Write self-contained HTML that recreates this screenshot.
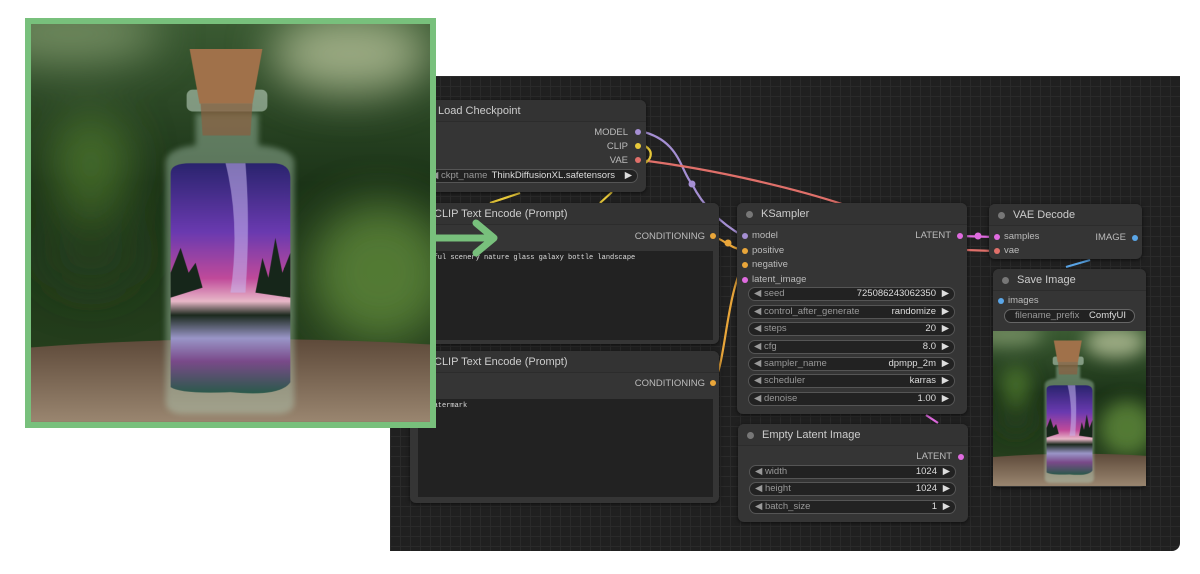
<!DOCTYPE html>
<html><head><meta charset="utf-8"><style>
*{margin:0;padding:0;box-sizing:border-box}
body{width:1200px;height:574px;background:#fff;position:relative;overflow:hidden;font-family:"Liberation Sans",sans-serif}
.canvas{position:absolute;left:390px;top:76px;width:790px;height:475px;background-color:#202020;border-radius:0 0 8px 0;
background-image:linear-gradient(#2a2a2a 1px,transparent 1px),linear-gradient(90deg,#2a2a2a 1px,transparent 1px);background-size:10px 10px}
.node{position:absolute;background:#353535;border-radius:6px;box-shadow:0 1px 4px rgba(0,0,0,.6)}
.title{height:22px;border-bottom:1px solid #2c2c2c;background:#333;border-radius:6px 6px 0 0;color:#ccc;font-size:11px;line-height:22px;padding-left:24px;position:relative}
.title:before{content:"";position:absolute;left:9px;top:8px;width:7px;height:7px;border-radius:50%;background:#777}
.t{position:absolute;font-size:9.5px;color:#bbb;white-space:nowrap}
.dot{position:absolute;width:6px;height:6px;border-radius:50%}
.w{position:absolute;height:14px;background:#222;border:1px solid #555;border-radius:8px;font-size:9.5px;color:#999;line-height:12px}
.w .l{position:absolute;left:5px}
.w .v{position:absolute;right:18px;color:#ddd}
.w .r{position:absolute;right:5px;color:#ddd}
.ta{position:absolute;background:#222;font-family:"Liberation Mono",monospace;font-size:7px;color:#ddd;padding:3px}
svg{display:block}
</style></head><body>
<div class="canvas"></div>
<svg style="position:absolute;left:0;top:0" width="1200" height="574">
<g fill="none" stroke-width="2.2">
<path d="M640 131 C680 140,680 170,692 184 C700 200,715 220,743 236" stroke="#a58fd3"/>
<path d="M640 160 C720 170,800 190,845 205" stroke="#e0706a"/>
<path d="M966 250 L995 251" stroke="#e0706a"/>
<path d="M645 146 C655 152,650 160,645 163" stroke="#e8c93a"/>
<path d="M490 203 L520 193" stroke="#e8c93a"/>
<path d="M600 203 L612 192" stroke="#e8c93a"/>
<path d="M712 236 C725 240,730 248,743 250" stroke="#e9a63a"/>
<path d="M712 382 C725 375,725 300,743 265" stroke="#e9a63a"/>
<path d="M960 236 L995 237" stroke="#e06be0"/>
<path d="M926 415 L938 423" stroke="#e06be0"/>
<path d="M1066 267 L1090 260" stroke="#5aa6e8"/>
</g>
<circle cx="692" cy="184" r="3.5" fill="#a58fd3"/><circle cx="728" cy="243" r="3.5" fill="#e9a63a"/><circle cx="978" cy="236" r="3.5" fill="#e06be0"/>
</svg>

<div class="node" style="left:395px;top:100px;width:251px;height:92px">
<div class="title" style="padding-left:43px">Load Checkpoint</div>
<div class="t" style="right:18px;top:27px">MODEL</div><div class="dot" style="right:5px;top:29px;background:#a58fd3"></div>
<div class="t" style="right:18px;top:41px">CLIP</div><div class="dot" style="right:5px;top:43px;background:#e8c93a"></div>
<div class="t" style="right:18px;top:55px">VAE</div><div class="dot" style="right:5px;top:57px;background:#e0706a"></div>
<div class="w" style="left:30px;top:69px;width:213px"><span class="l">◀ ckpt_name</span><span class="v" style="right:22px">ThinkDiffusionXL.safetensors</span><span class="r">▶</span></div>
</div>

<div class="node" style="left:410px;top:203px;width:309px;height:141px">
<div class="title">CLIP Text Encode (Prompt)</div>
<div class="t" style="right:14px;top:28px">CONDITIONING</div><div class="dot" style="right:3px;top:30px;background:#e9a63a"></div>
<div class="ta" style="left:8px;top:48px;width:295px;height:89px">utiful scenery nature glass galaxy bottle landscape</div>
</div>

<div class="node" style="left:410px;top:351px;width:309px;height:152px">
<div class="title">CLIP Text Encode (Prompt)</div>
<div class="t" style="right:14px;top:27px">CONDITIONING</div><div class="dot" style="right:3px;top:29px;background:#e9a63a"></div>
<div class="ta" style="left:8px;top:48px;width:295px;height:98px">, watermark</div>
</div>

<div class="node" style="left:737px;top:203px;width:230px;height:211px">
<div class="title">KSampler</div>
<div class="dot" style="left:5px;top:30px;background:#a58fd3"></div><div class="t" style="left:15px;top:27px">model</div>
<div class="dot" style="left:5px;top:45px;background:#e9a63a"></div><div class="t" style="left:15px;top:42px">positive</div>
<div class="dot" style="left:5px;top:59px;background:#e9a63a"></div><div class="t" style="left:15px;top:56px">negative</div>
<div class="dot" style="left:5px;top:74px;background:#e06be0"></div><div class="t" style="left:15px;top:71px">latent_image</div>
<div class="t" style="right:16px;top:27px">LATENT</div><div class="dot" style="right:4px;top:30px;background:#e06be0"></div>
<div class="w" style="left:11px;top:84px;width:207px"><span class="l">◀ seed</span><span class="v">725086243062350</span><span class="r">▶</span></div>
<div class="w" style="left:11px;top:102px;width:207px"><span class="l">◀ control_after_generate</span><span class="v">randomize</span><span class="r">▶</span></div>
<div class="w" style="left:11px;top:119px;width:207px"><span class="l">◀ steps</span><span class="v">20</span><span class="r">▶</span></div>
<div class="w" style="left:11px;top:137px;width:207px"><span class="l">◀ cfg</span><span class="v">8.0</span><span class="r">▶</span></div>
<div class="w" style="left:11px;top:154px;width:207px"><span class="l">◀ sampler_name</span><span class="v">dpmpp_2m</span><span class="r">▶</span></div>
<div class="w" style="left:11px;top:171px;width:207px"><span class="l">◀ scheduler</span><span class="v">karras</span><span class="r">▶</span></div>
<div class="w" style="left:11px;top:189px;width:207px"><span class="l">◀ denoise</span><span class="v">1.00</span><span class="r">▶</span></div>
</div>

<div class="node" style="left:738px;top:424px;width:230px;height:98px">
<div class="title">Empty Latent Image</div>
<div class="t" style="right:16px;top:27px">LATENT</div><div class="dot" style="right:4px;top:30px;background:#e06be0"></div>
<div class="w" style="left:11px;top:41px;width:207px"><span class="l">◀ width</span><span class="v">1024</span><span class="r">▶</span></div>
<div class="w" style="left:11px;top:58px;width:207px"><span class="l">◀ height</span><span class="v">1024</span><span class="r">▶</span></div>
<div class="w" style="left:11px;top:76px;width:207px"><span class="l">◀ batch_size</span><span class="v">1</span><span class="r">▶</span></div>
</div>

<div class="node" style="left:989px;top:204px;width:153px;height:55px">
<div class="title">VAE Decode</div>
<div class="dot" style="left:5px;top:30px;background:#e06be0"></div><div class="t" style="left:15px;top:27px">samples</div>
<div class="dot" style="left:5px;top:44px;background:#e0706a"></div><div class="t" style="left:15px;top:41px">vae</div>
<div class="t" style="right:16px;top:28px">IMAGE</div><div class="dot" style="right:4px;top:31px;background:#5aa6e8"></div>
</div>

<div class="node" style="left:993px;top:269px;width:153px;height:218px">
<div class="title">Save Image</div>
<div class="dot" style="left:5px;top:29px;background:#5aa6e8"></div><div class="t" style="left:15px;top:26px">images</div>
<div class="w" style="left:11px;top:40px;width:131px;border-color:#666"><span class="l" style="left:10px">filename_prefix</span><span class="v" style="right:8px">ComfyUI</span></div>
<svg style="position:absolute;left:0;top:62px" width="153" height="155" viewBox="0 0 400 400" preserveAspectRatio="none">
<use href="#bottle"/></svg>
</div>

<div style="position:absolute;left:25px;top:18px;width:411px;height:410px;background:#78c07c;padding:6px">
<svg width="399" height="398" viewBox="0 0 400 400" preserveAspectRatio="none">
<defs>
<filter id="bl" x="-50%" y="-50%" width="200%" height="200%"><feGaussianBlur stdDeviation="22"/></filter>
<filter id="bl2"><feGaussianBlur stdDeviation="3"/></filter>
<g id="bottle">
<linearGradient id="bg" x1="0" y1="0" x2="0" y2="1"><stop offset="0" stop-color="#3a5a32"/><stop offset=".4" stop-color="#1c3418"/><stop offset="1" stop-color="#28421e"/></linearGradient>
<linearGradient id="gal" x1="0" y1="0" x2="0" y2="1"><stop offset="0" stop-color="#2a246e"/><stop offset=".3" stop-color="#6a3ab0"/><stop offset=".5" stop-color="#c04a9a"/><stop offset=".6" stop-color="#e8b8c8"/><stop offset=".66" stop-color="#1c2a1e"/><stop offset=".76" stop-color="#9a96c8"/><stop offset=".86" stop-color="#7a4a8a"/><stop offset="1" stop-color="#2a5a4a"/></linearGradient>
<linearGradient id="gr" x1="0" y1="0" x2="0" y2="1"><stop offset="0" stop-color="#5e4a3a"/><stop offset="1" stop-color="#9a8670"/></linearGradient>
<rect width="400" height="400" fill="url(#bg)"/>
<g filter="url(#bl)">
<ellipse cx="320" cy="30" rx="80" ry="40" fill="#c8d0a8" opacity=".7"/>
<ellipse cx="40" cy="10" rx="90" ry="30" fill="#98ae80" opacity=".6"/>
<ellipse cx="350" cy="250" rx="70" ry="70" fill="#6a963e" opacity=".7"/>
<ellipse cx="60" cy="140" rx="40" ry="50" fill="#5a8a34" opacity=".6"/>
<ellipse cx="60" cy="230" rx="50" ry="40" fill="#23401a" opacity=".6"/>
</g>
<path d="M0 325 Q200 310 400 322 L400 400 L0 400Z" fill="url(#gr)"/>
<g filter="url(#bl2)">
<path d="M135 140 Q135 125 165 122 L165 90 L228 90 L228 122 Q264 125 264 140 L264 380 Q264 392 245 392 L155 392 Q135 392 135 380Z" fill="#b8d8c0" opacity=".4"/>
</g>
<rect x="156" y="66" width="81" height="22" rx="6" fill="#c8dccc" opacity=".55"/>
<path d="M159 25 L232 25 L222 80 L169 80Z" fill="#a0714a"/>
<path d="M170 80 L222 80 L220 112 L172 112Z" fill="#8a6040" opacity=".7"/>
<path d="M140 150 Q140 140 160 140 L242 140 Q260 140 260 155 L260 360 Q250 375 200 370 Q150 372 140 365Z" fill="url(#gal)"/>
<path d="M195 140 Q210 200 200 270 L215 270 Q220 200 215 140Z" fill="#c8b8f0" opacity=".55"/>
<path d="M140 250 L150 225 L158 250 L165 240 L172 265 L140 275Z M225 270 L232 235 L238 255 L245 215 L252 250 L260 230 L260 275Z" fill="#16261a"/>
</g>
</defs>
<use href="#bottle"/>
</svg>
</div>
<svg style="position:absolute;left:430px;top:218px" width="75" height="40"><path d="M4 20 H62 M46 5 L64 20 L46 35" fill="none" stroke="#78c07c" stroke-width="7" stroke-linecap="round" stroke-linejoin="round"/></svg>
</body></html>
